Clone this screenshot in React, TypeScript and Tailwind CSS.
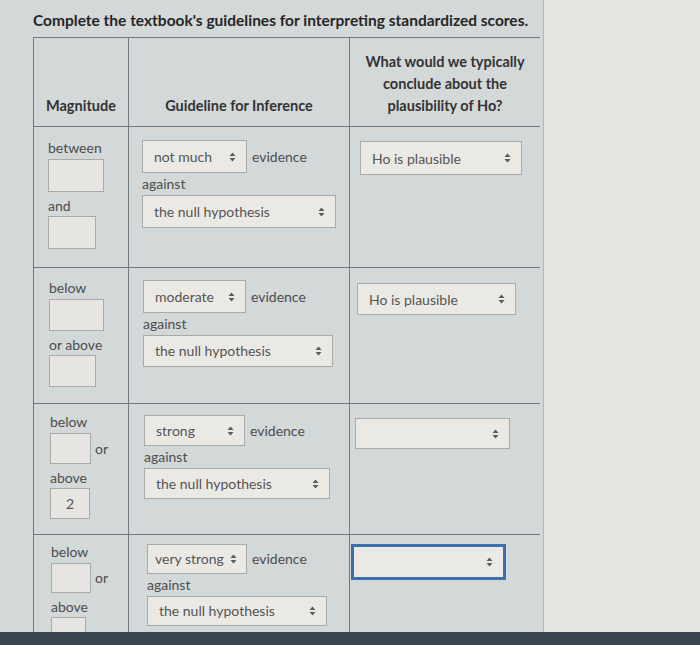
import React from "react";

const Arrows = () => (
  <svg width="7" height="10" viewBox="0 0 7 10" className="shrink-0">
    <path d="M3.5 0.5 L6.5 4 L0.5 4 Z" fill="#5a5a5a" />
    <path d="M3.5 9.5 L6.5 6 L0.5 6 Z" fill="#5a5a5a" />
  </svg>
);

type SelProps = { text?: string; w: number; h: number; focus?: boolean; pad?: number };

const Sel = ({ text = "", w, h, focus, pad = 11 }: SelProps) => (
  <div
    className={
      "flex items-center justify-between gap-[6px] bg-[#ebe9e4] text-[#555] text-[14px] shrink-0 whitespace-nowrap " +
      (focus ? "border-[3px] border-[#3c6fae]" : "border border-[#a9abab]")
    }
    style={{ width: w, height: h, paddingLeft: pad, paddingRight: 10 }}
  >
    <span>{text}</span>
    <Arrows />
  </div>
);

const Box = ({ w, h, text }: { w: number; h: number; text?: string }) => (
  <div
    className="border border-[#a9abab] bg-[#e6e5e1] flex items-center justify-center text-[14px] text-[#555] shrink-0"
    style={{ width: w, height: h }}
  >
    {text}
  </div>
);

const Cell = ({ children, className = "" }: { children?: React.ReactNode; className?: string }) => (
  <div className={"bg-[#d3d8d9] overflow-hidden " + className}>{children}</div>
);

type Row = {
  mag: { pt: number; l1: string; b1: [number, number]; l2: string; b2: [number, number]; b2text?: string; or?: boolean };
  g: { pt: number; sel: string; sw: number; sh: number; nw: number; nh: number; pl: number; sp: number };
  c: { pt: number; pl: number; w: number; h: number; text?: string; focus?: boolean };
};

const rows: Row[] = [
  {
    mag: { pt: 11, l1: "between", b1: [56, 33], l2: "and", b2: [48, 33] },
    g: { pt: 13, sel: "not much", sw: 105, sh: 33, nw: 194, nh: 33, pl: 13, sp: 11 },
    c: { pt: 14, pl: 10, w: 162, h: 34, text: "Ho is plausible" },
  },
  {
    mag: { pt: 10, l1: "below", b1: [55, 32], l2: "or above", b2: [47, 32] },
    g: { pt: 12, sel: "moderate", sw: 103, sh: 33, nw: 190, nh: 32, pl: 14, sp: 11 },
    c: { pt: 15, pl: 7, w: 159, h: 32, text: "Ho is plausible" },
  },
  {
    mag: { pt: 8, l1: "below", b1: [41, 31], l2: "above", b2: [40, 31], b2text: "2", or: true },
    g: { pt: 11, sel: "strong", sw: 101, sh: 31, nw: 186, nh: 31, pl: 15, sp: 11 },
    c: { pt: 14, pl: 5, w: 155, h: 31 },
  },
  {
    mag: { pt: 7, l1: "below", b1: [40, 30], l2: "above", b2: [35, 30], or: true },
    g: { pt: 9, sel: "very strong", sw: 100, sh: 30, nw: 180, nh: 30, pl: 18, sp: 7 },
    c: { pt: 9, pl: 1, w: 155, h: 36, focus: true },
  },
];

export default function App() {
  return (
    <div
      className="w-[700px] h-[645px] overflow-hidden flex flex-col bg-[#e7e5e0]"
      style={{ fontFamily: "Lato, 'Open Sans', sans-serif" }}
    >
      <div className="flex flex-1 min-h-0">
        <div className="w-[544px] shrink-0 bg-[#d3d8d9] border-r border-[#b5b8b8] pl-[33px] pt-[10px] overflow-hidden">
          <div className="text-[15.5px] font-bold text-[#262626] leading-[20px] h-[27px] whitespace-nowrap">
            Complete the textbook's guidelines for interpreting standardized scores.
          </div>
          <div className="grid grid-cols-[94px_220px_190px] grid-rows-[88px_140px_135px_130px_110px] gap-px bg-[#74797d] border border-[#74797d] w-[507px]">
            <Cell className="flex items-end pl-[12px] pb-[9px]">
              <span className="text-[14.5px] font-bold text-[#333] leading-[22px]">Magnitude</span>
            </Cell>
            <Cell className="flex items-end justify-center pb-[9px]">
              <span className="text-[14.5px] font-bold text-[#333] leading-[22px]">Guideline for Inference</span>
            </Cell>
            <Cell className="flex items-end justify-center pb-[9px]">
              <span className="text-[14.5px] font-bold text-[#333] leading-[22px] text-center">
                What would we typically
                <br />
                conclude about the
                <br />
                plausibility of Ho?
              </span>
            </Cell>
            {rows.map((r, i) => (
              <React.Fragment key={i}>
                <Cell>
                  <div className="flex flex-col text-[14px] text-[#4d4d4d] leading-[20px]" style={{ paddingTop: r.mag.pt, paddingLeft: 14 + i }}>
                    <span>{r.mag.l1}</span>
                    <div className="flex items-center gap-[4px] mt-[1px]">
                      <Box w={r.mag.b1[0]} h={r.mag.b1[1]} />
                      {r.mag.or && <span>or</span>}
                    </div>
                    <span className="mt-[4px]">{r.mag.l2}</span>
                    <Box w={r.mag.b2[0]} h={r.mag.b2[1]} text={r.mag.b2text} />
                  </div>
                </Cell>
                <Cell>
                  <div className="flex flex-col text-[14px] text-[#4d4d4d] leading-[20px]" style={{ paddingTop: r.g.pt, paddingLeft: r.g.pl }}>
                    <div className="flex items-center gap-[5px]">
                      <Sel text={r.g.sel} w={r.g.sw} h={r.g.sh} pad={r.g.sp} />
                      <span>evidence</span>
                    </div>
                    <span className="mt-[1px]">against</span>
                    <div className="mt-[1px]">
                      <Sel text="the null hypothesis" w={r.g.nw} h={r.g.nh} />
                    </div>
                  </div>
                </Cell>
                <Cell>
                  <div style={{ paddingTop: r.c.pt, paddingLeft: r.c.pl }}>
                    <Sel text={r.c.text} w={r.c.w} h={r.c.h} focus={r.c.focus} />
                  </div>
                </Cell>
              </React.Fragment>
            ))}
          </div>
        </div>
        <div className="flex-1 bg-[#e7e5e0]" />
      </div>
      <div className="h-[13px] shrink-0 bg-[#3b4651]" />
    </div>
  );
}
